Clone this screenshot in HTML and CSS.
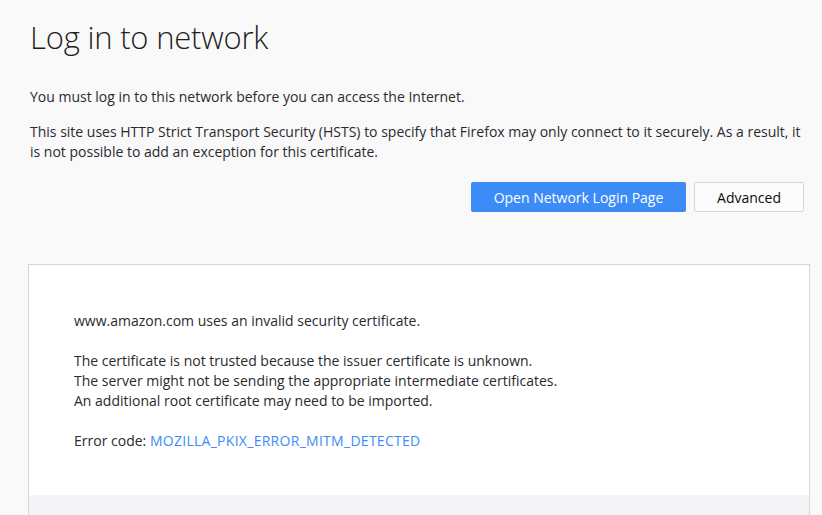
FILE: index.html
```html
<!DOCTYPE html>
<html>
<head>
<meta charset="utf-8">
<link rel="stylesheet" href="styles.css">
</head>
<body>
<div class="page">
  <h1 class="title">Log in to network</h1>
  <p class="desc">You must log in to this network before you can access the Internet.</p>
  <p class="desc hsts">This site uses HTTP Strict Transport Security (HSTS) to specify that Firefox may only connect to it securely. As a result, it is not possible to add an exception for this certificate.</p>
  <div class="actions">
    <button class="btn primary">Open Network Login Page</button>
    <button class="btn secondary">Advanced</button>
  </div>
  <div class="advanced">
    <div class="adv-body">
      <p class="line">www.amazon.com uses an invalid security certificate.</p>
      <p class="line para">The certificate is not trusted because the issuer certificate is unknown.<br>The server might not be sending the appropriate intermediate certificates.<br>An additional root certificate may need to be imported.</p>
      <p class="line para">Error code: <a class="code">MOZILLA_PKIX_ERROR_MITM_DETECTED</a></p>
    </div>
    <div class="adv-foot"></div>
  </div>
</div>
</body>
</html>
```
FILE: styles.css
```css
html, body {
  margin: 0;
  padding: 0;
  background: #f9f9fa;
  overflow: hidden;
}
body {
  font-family: "Open Sans", "Noto Sans", sans-serif;
  color: #2a2a2e;
}
.page {
  padding: 14px 12px 0 30px;
  width: 780px;
}
.title {
  margin: 0;
  font-family: "Open Sans", "Noto Sans", sans-serif;
  font-weight: 300;
  font-size: 31px;
  line-height: 47px;
  letter-spacing: -0.2px;
  color: #1f1f23;
}
.desc {
  margin: 0;
  font-size: 14px;
  line-height: 20px;
}
.desc:first-of-type {
  margin-top: 26px;
}
.hsts {
  margin-top: 15px;
}
.actions {
  display: flex;
  justify-content: flex-end;
  gap: 8px;
  margin-top: 20px;
  padding-right: 6px;
}
.btn {
  font-family: inherit;
  font-size: 14px;
  height: 30px;
  border-radius: 2px;
  padding: 0;
}
.primary {
  width: 215px;
  background: #3c8cf8;
  color: #fff;
  border: none;
}
.secondary {
  width: 110px;
  background: #fbfbfb;
  color: #0c0c0d;
  border: 1px solid #d7d7db;
}
.advanced {
  margin: 52px 0 0 -2px;
  background: #fff;
  border: 1px solid #d7d7db;
  border-bottom: none;
}
.adv-body {
  padding: 46px 44px 44px 45px;
}
.line {
  margin: 0;
  font-size: 14px;
  line-height: 20px;
}
.para {
  margin-top: 20px;
}
.code {
  color: #3c8cf8;
  letter-spacing: 0.28px;
}
.adv-foot {
  height: 30px;
  background: #f5f5f7;
}
```
